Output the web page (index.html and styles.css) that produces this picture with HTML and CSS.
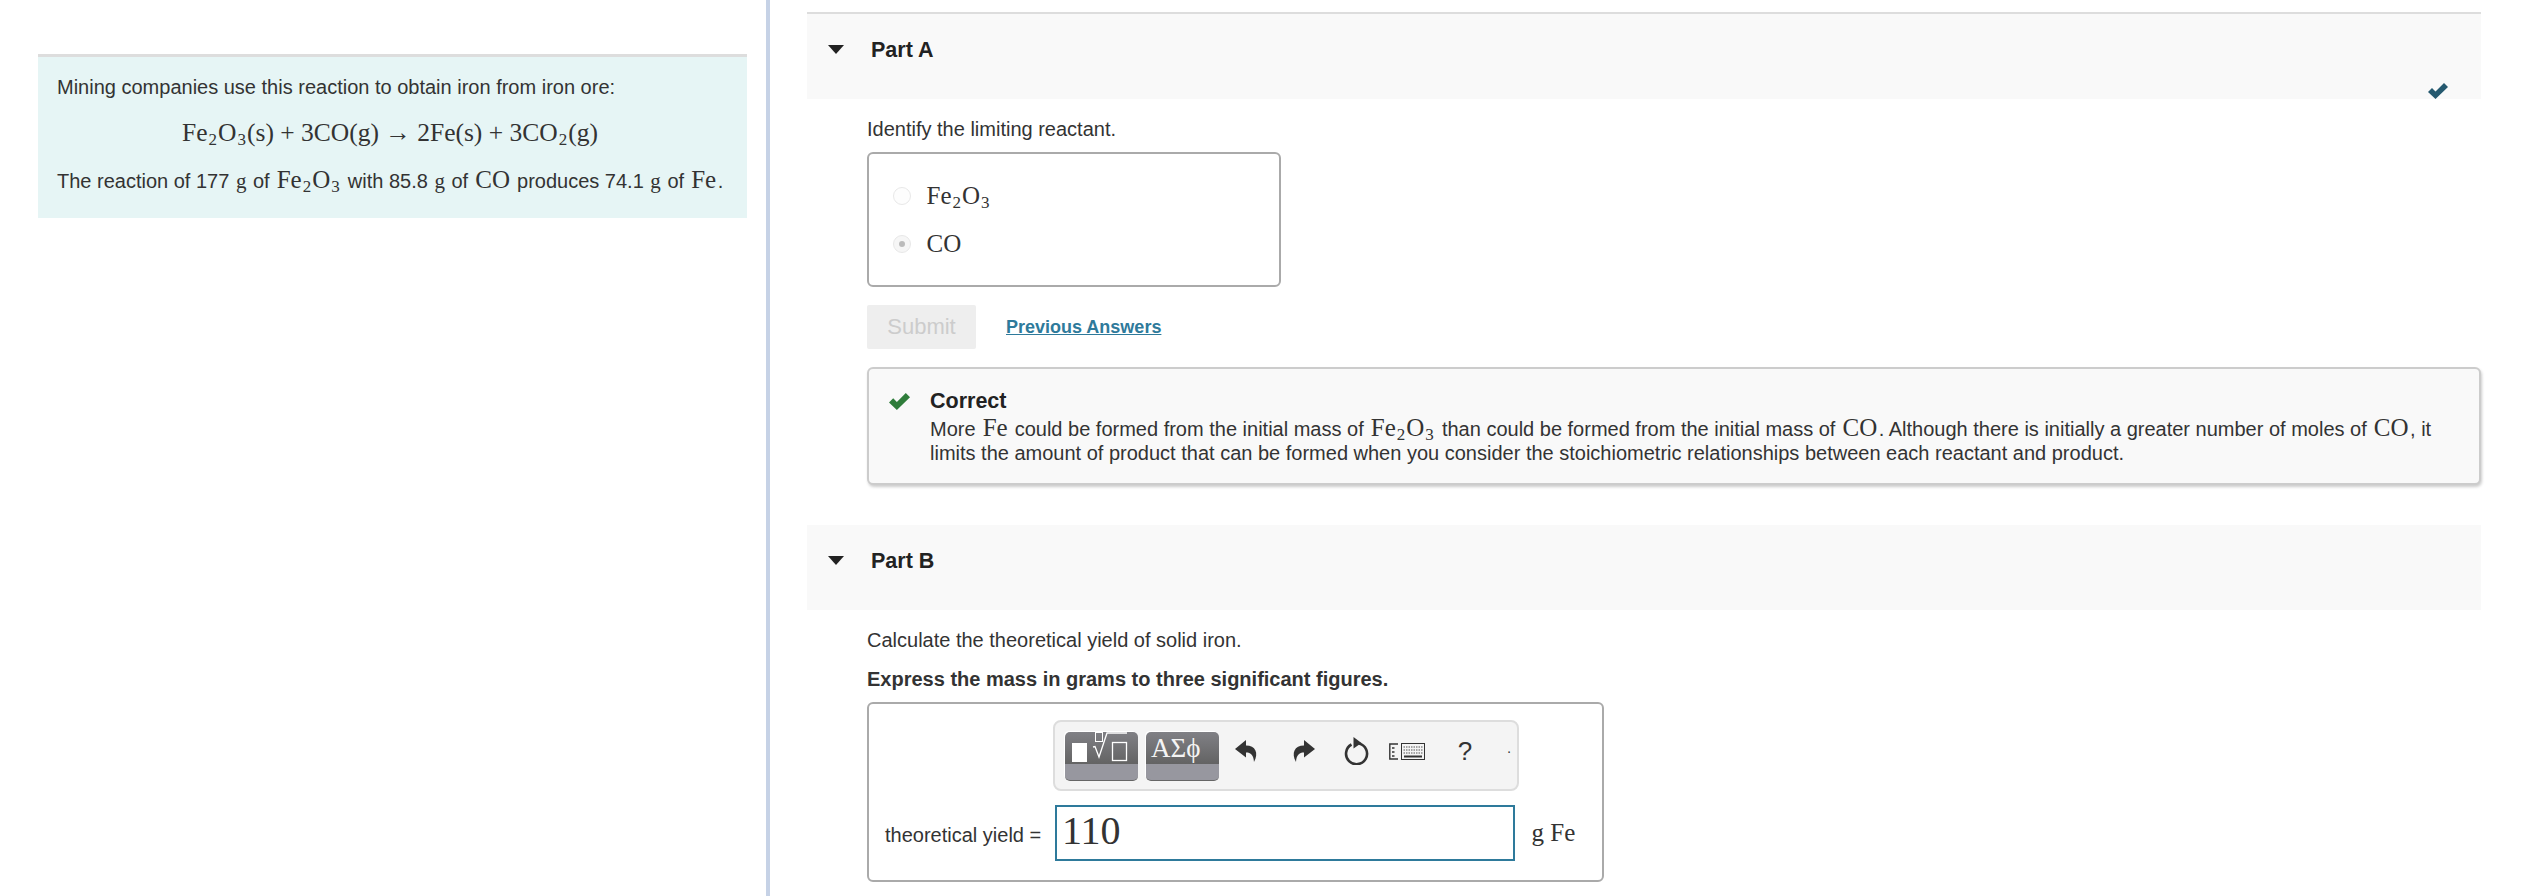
FILE: index.html
```html
<!DOCTYPE html>
<html lang="en">
<head>
    <meta charset="UTF-8">
    <title>Limiting reactant</title>
    <link rel="stylesheet" href="styles.css">
</head>
<body>
    <div class="left-col">
        <div class="intro">
            <p>Mining companies use this reaction to obtain iron from iron ore:</p>
            <p class="equation"><span class="m">Fe<sub>2</sub>O<sub>3</sub>(s) + 3CO(g) → 2Fe(s) + 3CO<sub>2</sub>(g)</span></p>
            <p>The reaction of 177 <span class="m unit">g</span> of <span class="m">Fe<sub>2</sub>O<sub>3</sub></span> with 85.8 <span class="m unit">g</span> of <span class="m">CO</span> produces 74.1 <span class="m unit">g</span> of <span class="m">Fe</span>.</p>
        </div>
    </div>

    <div class="right-col">
        <!-- Part A -->
        <section class="part part-first">
            <div class="part-head">
                <span class="caret"></span>
                <span class="part-title">Part A</span>
                <svg class="part-done" viewBox="0 0 20 16"><path d="M0 9 L4 5 L7.500 8.500 L16 0 L20 4 L7.500 16 Z"/></svg>
            </div>
            <div class="part-body">
                <p class="question">Identify the limiting reactant.</p>
                <div class="answer-box choices">
                    <div class="choice"><span class="radio"></span><span class="m choice-label">Fe<sub>2</sub>O<sub>3</sub></span></div>
                    <div class="choice"><span class="radio checked"></span><span class="m choice-label">CO</span></div>
                </div>
                <div class="actions">
                    <button class="submit" disabled>Submit</button>
                    <a class="prev-link" href="#">Previous Answers</a>
                </div>
                <div class="feedback">
                    <svg class="feedback-check" viewBox="0 0 20 16"><path d="M0 9 L4 5 L7.500 8.500 L16 0 L20 4 L7.500 16 Z"/></svg>
                    <div>
                        <strong class="feedback-title">Correct</strong>
                        <p class="feedback-text">More <span class="m">Fe</span> could be formed from the initial mass of <span class="m">Fe<sub>2</sub>O<sub>3</sub></span> than could be formed from the initial mass of <span class="m">CO</span>. Although there is initially a greater number of moles of <span class="m">CO</span>, it limits the amount of product that can be formed when you consider the stoichiometric relationships between each reactant and product.</p>
                    </div>
                </div>
            </div>
        </section>

        <!-- Part B -->
        <section class="part part-second">
            <div class="part-head">
                <span class="caret"></span>
                <span class="part-title">Part B</span>
            </div>
            <div class="part-body">
                <p class="question">Calculate the theoretical yield of solid iron.</p>
                <p class="instruction">Express the mass in grams to three significant figures.</p>
                <div class="answer-box entry">
                    <div class="toolbar">
                        <div class="tool-btn">
                            <svg class="tool-glyph" viewBox="0 0 73 32">
                                <rect x="7" y="11" width="15" height="19" fill="#fff"/>
                                <rect x="30.500" y="0.500" width="7" height="9" fill="none" stroke="#fff"/>
                                <path d="M28 15 L30 14.500 L34 25 L42 1 H62" fill="none" stroke="#fff" stroke-width="1.300"/>
                                <rect x="47.500" y="10.500" width="14" height="18" fill="none" stroke="#fff" stroke-width="1.300"/>
                            </svg>
                        </div>
                        <div class="tool-btn tool-greek">ΑΣϕ</div>
                        <div class="tool-slot slot-undo">
                            <svg class="tool-icon" viewBox="0 0 24 24"><path d="M11 1 L0 10 L11 18.500 V13.500 C16 13.500 18.500 16 19 23 C24 14 20.500 6.500 11 6.500 Z"/></svg>
                        </div>
                        <div class="tool-slot slot-undo">
                            <svg class="tool-icon flip" viewBox="0 0 24 24"><path d="M11 1 L0 10 L11 18.500 V13.500 C16 13.500 18.500 16 19 23 C24 14 20.500 6.500 11 6.500 Z"/></svg>
                        </div>
                        <div class="tool-slot slot-reset">
                            <svg class="tool-icon reset" viewBox="0 0 26 28"><path d="M8.500 7.500 A10.500 10.500 0 1 0 16 6.500" fill="none" stroke="#333" stroke-width="2.600"/><path d="M10.500 0 L18.500 6 L10.500 11.500 Z"/></svg>
                        </div>
                        <div class="tool-slot slot-keys">
                            <svg class="keys" viewBox="0 0 36 17">
                                <path d="M9 1 H0.800 V16 H9" fill="none" stroke="#333" stroke-width="1.400"/>
                                <path d="M3 5 h2.500 M3 9 h2.500 M3 13 h2.500" stroke="#333" stroke-width="1.400"/>
                                <rect x="12.500" y="0.500" width="23" height="16" fill="none" stroke="#333"/>
                                <path d="M14.500 4 h19 M14.500 7 h19 M14.500 10 h19" stroke="#555" stroke-dasharray="1.500 1"/>
                                <path d="M15 13.500 h18" stroke="#333" stroke-width="2"/>
                            </svg>
                        </div>
                        <div class="tool-slot slot-help">?</div>
                        <div class="tool-slot slot-dot">·</div>
                    </div>
                    <div class="entry-row">
                        <span class="entry-label">theoretical yield =</span>
                        <div class="entry-input">110</div>
                        <span class="m entry-unit">g Fe</span>
                    </div>
                </div>
            </div>
        </section>
    </div>
</body>
</html>
```

FILE: styles.css
```css
html, body {
    height: 896px;
    overflow: hidden;
}

body {
    margin: 0;
    display: flex;
    font-family: 'Liberation Sans', Arial, sans-serif;
    font-size: 20px;
    line-height: 24px;
    color: #333;
    background: white;
}

p {
    margin: 0;
}

/* math text */
.m {
    font-family: 'Liberation Serif', 'Times New Roman', serif;
    font-size: 25px;
    line-height: 20px;
    padding: 0 1.500px;
}

.m sub {
    font-size: 17px;
    line-height: 0;
    vertical-align: -4px;
    margin: 0 1px;
}

.m.unit {
    font-size: 21px;
    padding: 0 1px;
}

.left-col {
    flex: none;
    width: 709px;
    height: 842px;
    padding: 54px 19px 0 38px;
    border-right: 4px solid #c6d2e6;
}

.intro {
    height: 164px;
    box-sizing: border-box;
    padding: 18px 10px 0 19px;
    background: #e6f5f5;
    border-top: 3px solid #ddd;
}

.equation {
    text-align: center;
    margin: 23px 14px 23px 0;
}

.equation .m {
    font-size: 25.500px;
}

.right-col {
    margin-left: 37px;
    width: 1674px;
    padding-top: 12px;
}

.part-first {
    border-top: 2px solid #ddd;
}

.part-second {
    margin-top: 40px;
}

.part-head {
    position: relative;
    height: 85px;
    background: #f9f9f9;
    display: flex;
    align-items: flex-start;
    padding: 24px 0 0 21px;
    box-sizing: border-box;
}

.caret {
    width: 0;
    height: 0;
    margin-top: 7px;
    border-left: 8.500px solid transparent;
    border-right: 8.500px solid transparent;
    border-top: 9px solid #222;
}

.part-title {
    margin-left: 27px;
    font-size: 21.500px;
    font-weight: bold;
    color: #222;
}

.part-done {
    position: absolute;
    right: 33px;
    top: 69px;
    width: 20px;
    height: 16px;
    fill: #25596f;
}

.part-body {
    padding: 18px 0 0 60px;
}

.answer-box {
    border: 2px solid #aaa;
    border-radius: 6px;
    box-sizing: border-box;
}

.choices {
    margin-top: 11px;
    width: 414px;
    height: 135px;
    padding: 18px 0 0 24px;
}

.choice {
    display: flex;
    align-items: center;
    height: 48px;
}

.radio {
    width: 18px;
    height: 18px;
    border-radius: 50%;
    border: 1px solid #e8e8e8;
    box-sizing: border-box;
    background: #fdfdfd;
    display: flex;
    align-items: center;
    justify-content: center;
}

.radio.checked {
    background: #f6f6f6;
}

.radio.checked::after {
    content: "";
    width: 6px;
    height: 6px;
    border-radius: 50%;
    background: #bbb;
}

.choice-label {
    margin-left: 14px;
}

.actions {
    display: flex;
    align-items: center;
    margin-top: 18px;
}

.submit {
    width: 109px;
    height: 44px;
    border: none;
    border-radius: 2px;
    background: #eee;
    color: #ccc;
    font-family: inherit;
    font-size: 22px;
    padding: 0;
}

.prev-link {
    margin-left: 30px;
    font-size: 18px;
    font-weight: bold;
    color: #2e7a9b;
}

.feedback {
    display: flex;
    margin-top: 18px;
    width: 1614px;
    height: 118px;
    box-sizing: border-box;
    padding: 20px 20px 0 20px;
    background: #f9f9f9;
    border: 2px solid #ccc;
    border-radius: 6px;
    box-shadow: 1px 2px 3px rgba(0,0,0,0.2);
}

.feedback-check {
    flex: none;
    width: 21px;
    height: 17px;
    margin: 4px 20px 0 0;
    fill: #2f7d3b;
}

.feedback-title {
    display: block;
    color: #222;
    font-size: 21.500px;
}

.feedback-text {
    margin-top: 4px;
}

.instruction {
    margin-top: 15px;
    font-weight: bold;
}

.entry {
    margin-top: 11px;
    width: 737px;
    height: 180px;
    padding: 16px 0 0 16px;
}

.toolbar {
    display: flex;
    align-items: flex-start;
    margin-left: 168px;
    width: 466px;
    height: 71px;
    box-sizing: border-box;
    padding: 10px 0 0 10px;
    background: #f4f4f4;
    border: 2px solid #ddd;
    border-radius: 8px;
}

.tool-btn {
    flex: none;
    width: 73px;
    height: 49px;
    margin-right: 8px;
    border-radius: 5px;
    box-sizing: border-box;
    background: linear-gradient(#808085, #636363 67%, #97979f 67%, #97979f);
    border-bottom: 1px solid #666;
    box-shadow: -1px -1px 0 #fff;
    overflow: hidden;
}

.tool-glyph {
    display: block;
    width: 73px;
    height: 32px;
}

.tool-greek {
    margin-right: 0;
    color: #f4f4f4;
    font-family: 'Liberation Serif', serif;
    font-size: 27px;
    line-height: 32px;
    padding-left: 5px;
}

.tool-slot {
    flex: none;
    height: 38px;
    display: flex;
    align-items: center;
    justify-content: center;
    color: #333;
}

.slot-undo {
    width: 56px;
}

.slot-reset {
    width: 50px;
}

.slot-keys {
    width: 52px;
}

.slot-help {
    width: 56px;
    margin-left: 4px;
    font-size: 26px;
}

.slot-dot {
    width: 24px;
    margin-left: 4px;
    font-size: 14px;
}

.tool-icon {
    width: 24px;
    height: 24px;
    fill: #333;
}

.tool-icon.flip {
    transform: scaleX(-1);
}

.tool-icon.reset {
    width: 26px;
    height: 28px;
}

.keys {
    width: 36px;
    height: 17px;
}

.entry-row {
    display: flex;
    align-items: center;
    margin-top: 14px;
}

.entry-label {
    width: 170px;
    margin-top: 4px;
}

.entry-input {
    width: 460px;
    height: 56px;
    box-sizing: border-box;
    border: 2px solid #2e7a9b;
    padding-left: 5px;
    font-family: 'Liberation Serif', serif;
    font-size: 40px;
    line-height: 48px;
}

.m.entry-unit {
    margin-left: 15px;
    font-size: 25px;
}
```
